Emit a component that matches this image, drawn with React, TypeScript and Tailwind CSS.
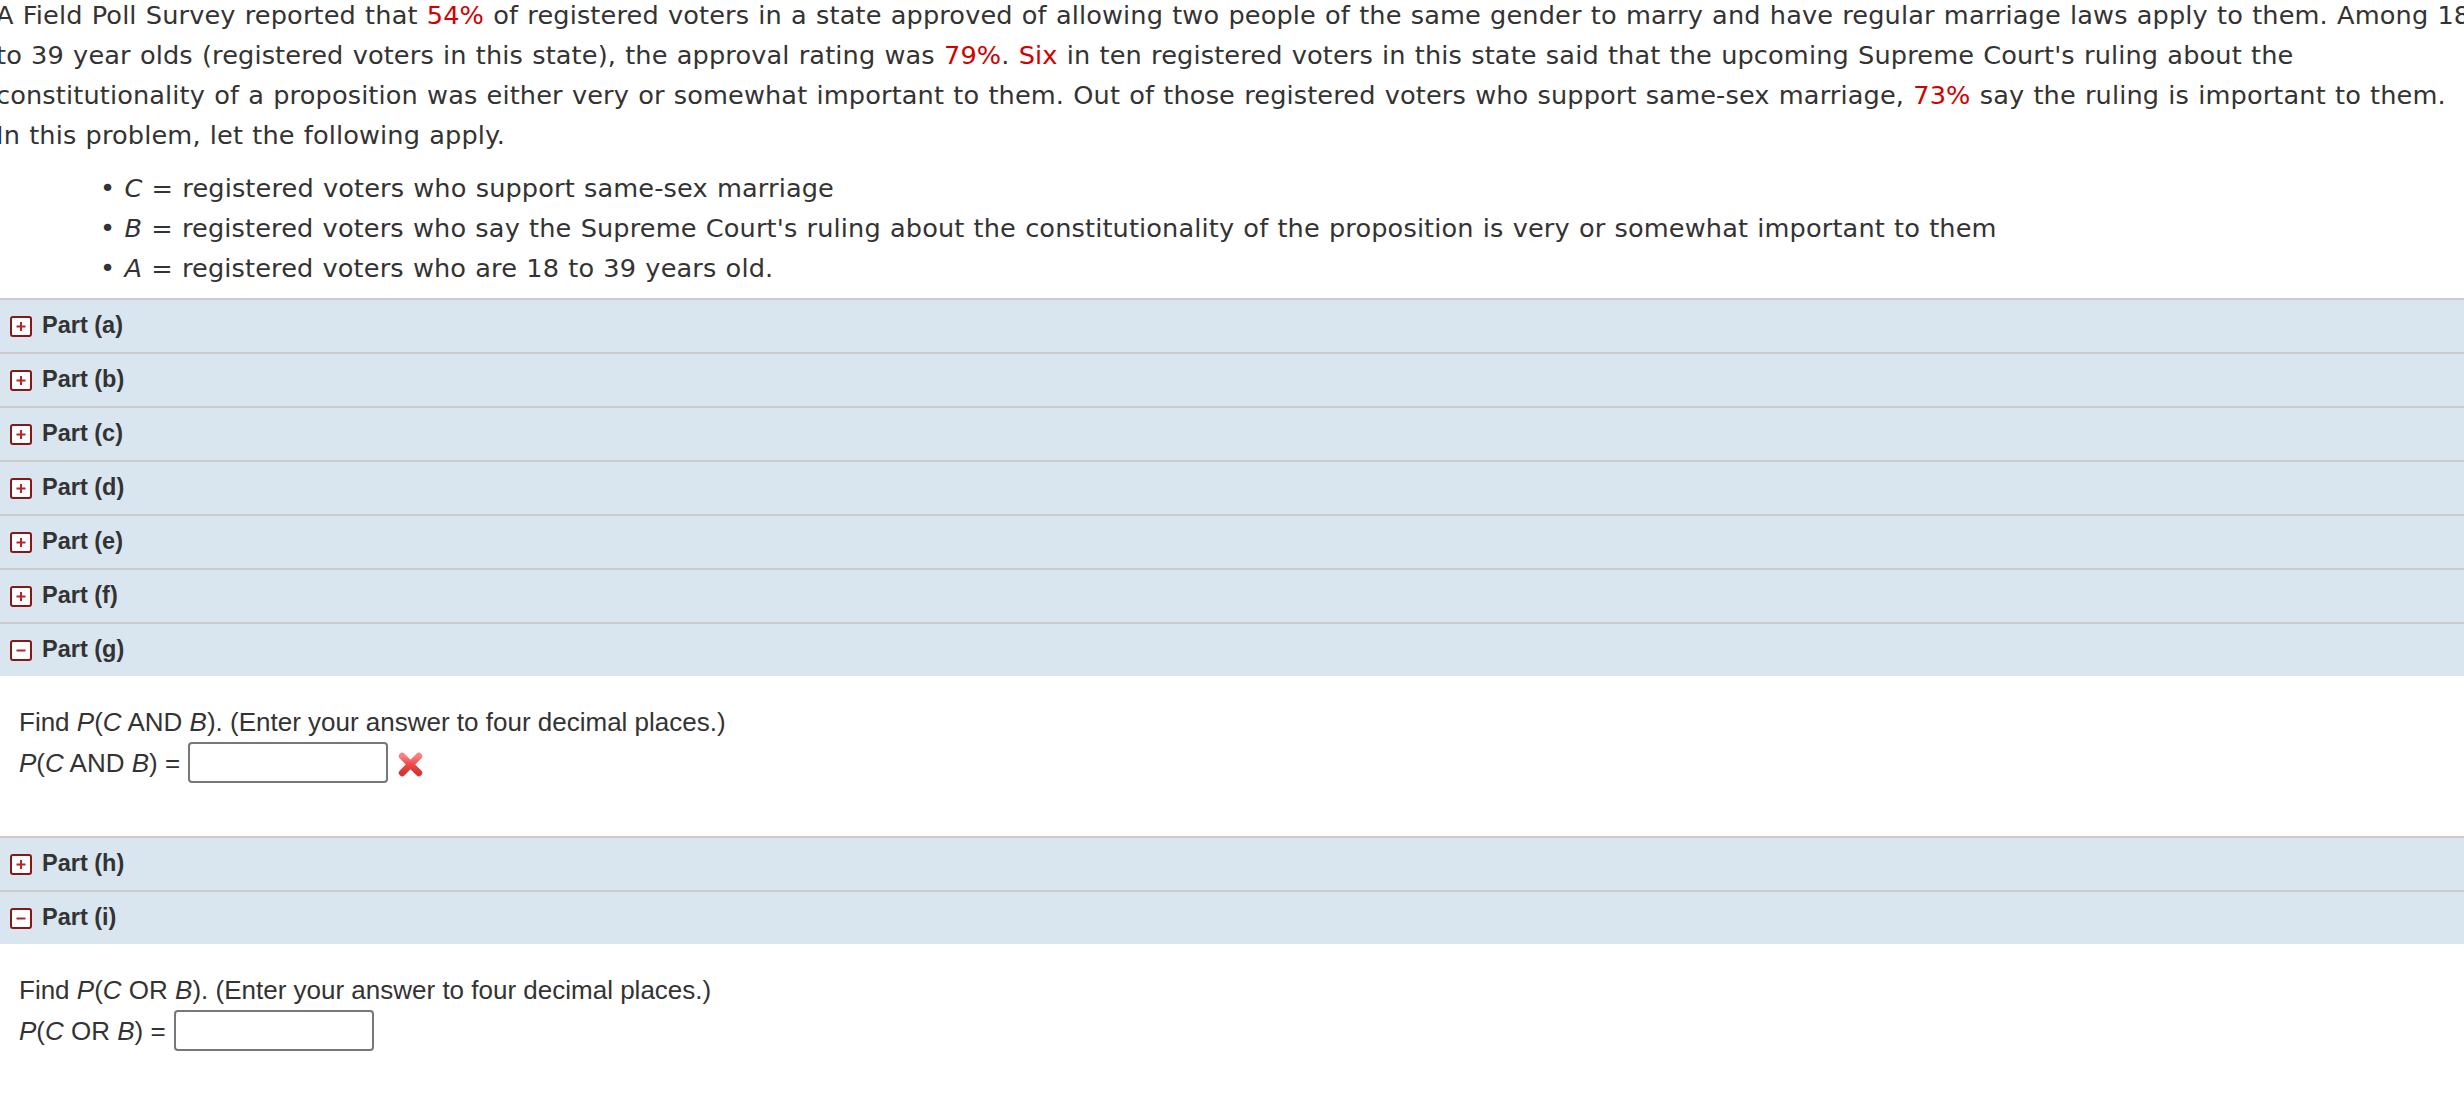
import React from "react";

const parts = ["a", "b", "c", "d", "e", "f", "g", "h", "i"];

function BoxIcon({ open }: { open: boolean }) {
    return (
        <svg width="22" height="21" viewBox="0 0 22 21" className="shrink-0">
            <rect x="1" y="1" width="20" height="19" rx="2" fill="#ffffff" stroke="#8a1616" strokeWidth="2" />
            <rect x="6.5" y="9.5" width="9" height="2" fill="#b8242a" />
            {!open && <rect x="10" y="6" width="2" height="9" fill="#b8242a" />}
        </svg>
    );
}

function WrongMark() {
    return (
        <svg width="27" height="27" viewBox="0 0 26 26" className="shrink-0">
            <defs>
                <linearGradient id="xg" x1="0" y1="0" x2="0" y2="1">
                    <stop offset="0" stopColor="#ff8080" />
                    <stop offset="0.5" stopColor="#ee4848" />
                    <stop offset="1" stopColor="#d83434" />
                </linearGradient>
            </defs>
            <path d="M5 5 L21 21 M21 5 L5 21" stroke="url(#xg)" strokeWidth="6.5" strokeLinecap="round" />
        </svg>
    );
}

function PartRow({ letter, open }: { letter: string; open: boolean }) {
    return (
        <div className="flex h-[54px] items-center gap-[10px] border-t-2 border-[#cccccc] bg-[#d9e5ef] pl-[10px]">
            <BoxIcon open={open} />
            <span className="font-['Liberation_Sans',Arial,sans-serif] text-[23.5px] font-bold text-[#333333]">
                Part ({letter})
            </span>
        </div>
    );
}

function Answer({ op, wrong }: { op: string; wrong?: boolean }) {
    return (
        <div className="pt-[26px] pb-[53px] pl-[19px] font-['Liberation_Sans',Arial,sans-serif] text-[26px] leading-[40px] text-[#333333]">
            <div className="whitespace-nowrap">
                Find <i>P</i>(<i>C</i> {op} <i>B</i>). (Enter your answer to four decimal places.)
            </div>
            <div className="flex items-center">
                <span className="whitespace-nowrap">
                    <i>P</i>(<i>C</i> {op} <i>B</i>) =
                </span>
                <input
                    type="text"
                    className="ml-[8px] h-[41px] w-[200px] rounded-[4px] border-2 border-[#777777] bg-white"
                />
                {wrong && (
                    <span className="ml-[9px] mt-[4px]">
                        <WrongMark />
                    </span>
                )}
            </div>
        </div>
    );
}

export default function App() {
    const red = "text-[#d40000]";
    return (
        <div className="h-[1096px] w-[2464px] overflow-hidden bg-white">
            <div className="-mt-[5px] -ml-[4px] font-['DejaVu_Sans',Verdana,sans-serif] text-[25.6px] leading-[40px] tracking-[0.13px] [word-spacing:0.9px] text-[#333333]">
                <div className="whitespace-nowrap">
                    A Field Poll Survey reported that <span className={red}>54%</span> of registered voters in a state approved of allowing two people of the same gender to marry and have regular marriage laws apply to them. Among 18
                </div>
                <div className="whitespace-nowrap">
                    to 39 year olds (registered voters in this state), the approval rating was <span className={red}>79%</span>. <span className={red}>Six</span> in ten registered voters in this state said that the upcoming Supreme Court's ruling about the
                </div>
                <div className="whitespace-nowrap">
                    constitutionality of a proposition was either very or somewhat important to them. Out of those registered voters who support same-sex marriage, <span className={red}>73%</span> say the ruling is important to them.
                </div>
                <div className="whitespace-nowrap">In this problem, let the following apply.</div>

                <ul className="mt-[13px] mb-[10px] pl-[104px]">
                    <li className="whitespace-nowrap">
                        • <i>C</i> = registered voters who support same-sex marriage
                    </li>
                    <li className="whitespace-nowrap">
                        • <i>B</i> = registered voters who say the Supreme Court's ruling about the constitutionality of the proposition is very or somewhat important to them
                    </li>
                    <li className="whitespace-nowrap">
                        • <i>A</i> = registered voters who are 18 to 39 years old.
                    </li>
                </ul>
            </div>

            {parts.slice(0, 6).map((p) => (
                <PartRow key={p} letter={p} open={false} />
            ))}
            <PartRow letter="g" open={true} />
            <Answer op="AND" wrong />
            <PartRow letter="h" open={false} />
            <PartRow letter="i" open={true} />
            <Answer op="OR" />
        </div>
    );
}
